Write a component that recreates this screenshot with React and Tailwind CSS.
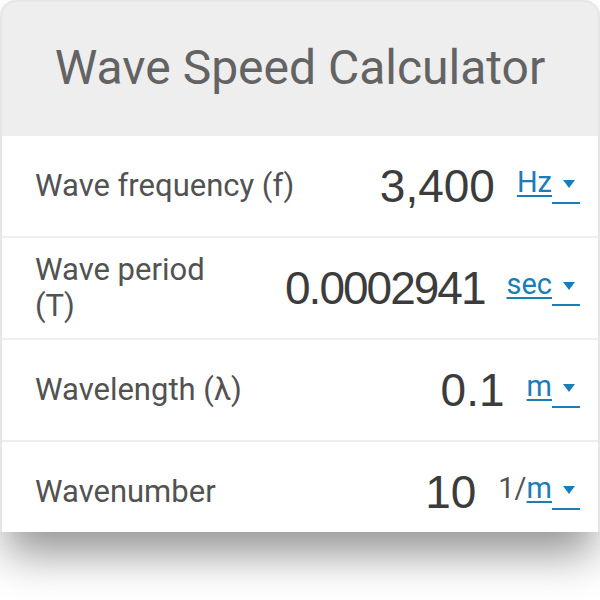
const rows = [
  { label: "Wave frequency (f)", value: "3,400", unit: "Hz" },
  { label: "Wave period (T)", value: "0.0002941", unit: "sec", tight: true },
  { label: "Wavelength (λ)", value: "0.1", unit: "m" },
  { label: "Wavenumber", value: "10", prefix: "1/", unit: "m" },
];

const Row = ({ r }) => (
  <div className="h-[100px] shrink-0 bg-white flex items-center pl-[33px] pr-[18px]">
    <div className="flex-1 min-w-0 text-[31px] leading-[36px] text-[#525252]">{r.label}</div>
    <div className="ml-12 flex items-center">
      <span
        className={
          r.tight
            ? "font-['Liberation_Sans',Arial,sans-serif] text-[46px] tracking-[-2px] text-[#3c3c3c] leading-none"
            : "font-['Liberation_Sans',Arial,sans-serif] text-[46px] text-[#3c3c3c] leading-none"
        }
      >
        {r.value}
      </span>
      <span className="ml-[22px] text-[29px] leading-none text-[#1a7db8] whitespace-nowrap">
        {r.prefix && <span className="text-[#525252]">{r.prefix}</span>}
        <span className="underline decoration-2 underline-offset-[3px]">{r.unit}</span>
        <span className="inline-block pl-[11px] pr-[5px] pb-[5px] border-b-2 border-[#1a7db8] align-baseline">
          <svg width="12" height="8" viewBox="0 0 12 8" className="inline-block align-middle">
            <path d="M0 0h12L6 8z" fill="#1a7db8" />
          </svg>
        </span>
      </span>
    </div>
  </div>
);

export default function App() {
  return (
    <div className="w-[600px] h-[600px] bg-white overflow-hidden font-['Roboto',Arial,sans-serif]">
      <div className="h-[532px] flex flex-col gap-[2px] overflow-hidden rounded-t-[16px] border-2 border-b-0 border-[#e6e6e6] bg-[#eeeeee] shadow-[0_28px_44px_-6px_rgba(0,0,0,0.42)]">
        <div className="h-[132px] shrink-0 flex items-center justify-center text-[48px] text-[#636363]">
          Wave Speed Calculator
        </div>
        {rows.map((r) => (
          <Row key={r.label} r={r} />
        ))}
      </div>
    </div>
  );
}
